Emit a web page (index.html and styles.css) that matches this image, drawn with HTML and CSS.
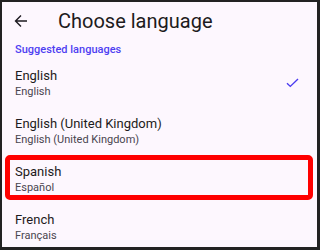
FILE: index.html
```html
<!DOCTYPE html>
<html>
<head>
<meta charset="utf-8">
<link rel="stylesheet" href="styles.css">
</head>
<body>
<div class="screen">
  <header class="topbar">
    <svg class="back" width="14" height="14" viewBox="0 0 14 14" aria-hidden="true">
      <path d="M13 7H1.8M7 1.5L1.5 7L7 12.5" fill="none" stroke="#1d1b20" stroke-width="1.4"/>
    </svg>
    <h1 class="title">Choose language</h1>
  </header>
  <div class="section">Suggested languages</div>
  <ul class="list">
    <li class="row">
      <div class="texts">
        <div class="name">English</div>
        <div class="native">English</div>
      </div>
      <svg class="check" width="13" height="10" viewBox="0 0 13 10" aria-hidden="true">
        <path d="M1 5.2L4.3 8.4L12 1" fill="none" stroke="#4a3af0" stroke-width="1.4"/>
      </svg>
    </li>
    <li class="row">
      <div class="texts">
        <div class="name">English (United Kingdom)</div>
        <div class="native">English (United Kingdom)</div>
      </div>
    </li>
    <li class="row highlighted">
      <div class="texts">
        <div class="name">Spanish</div>
        <div class="native">Español</div>
      </div>
    </li>
    <li class="row">
      <div class="texts">
        <div class="name">French</div>
        <div class="native">Français</div>
      </div>
    </li>
  </ul>
</div>
</body>
</html>
```
FILE: styles.css
```css
html, body {
  margin: 0;
  padding: 0;
  background: #222222;
  height: 250px;
  overflow: hidden;
}
.screen {
  margin: 2px 3px 0 2px;
  height: 245px;
  background: #fdf7fe;
  font-family: Roboto, "Noto Sans", sans-serif;
  overflow: hidden;
}
.topbar {
  display: flex;
  align-items: center;
  height: 38px;
  padding-left: 12px;
}
.back {
  display: block;
  flex: none;
}
.title {
  margin: 0 0 0 30px;
  font-size: 20px;
  font-weight: 400;
  color: #1d1b20;
  line-height: 24px;
}
.section {
  height: 19px;
  padding-left: 13px;
  font-size: 11px;
  font-weight: 500;
  color: #4f3ff2;
  line-height: 19px;
}
.list {
  list-style: none;
  margin: 0;
  padding: 0;
}
.row {
  position: relative;
  display: flex;
  align-items: center;
  justify-content: space-between;
  height: 48px;
  padding: 0 18px 0 13px;
}
.texts {
  display: flex;
  flex-direction: column;
  gap: 2px;
}
.name {
  font-size: 13px;
  line-height: 15px;
  color: #1d1b20;
}
.native {
  font-size: 11px;
  line-height: 13px;
  color: #49454f;
}
.check {
  display: block;
}
.highlighted::after {
  content: "";
  position: absolute;
  left: 3px;
  right: 4px;
  top: 0;
  bottom: 3px;
  border: 5px solid #ff0000;
  border-radius: 5px;
}
```
